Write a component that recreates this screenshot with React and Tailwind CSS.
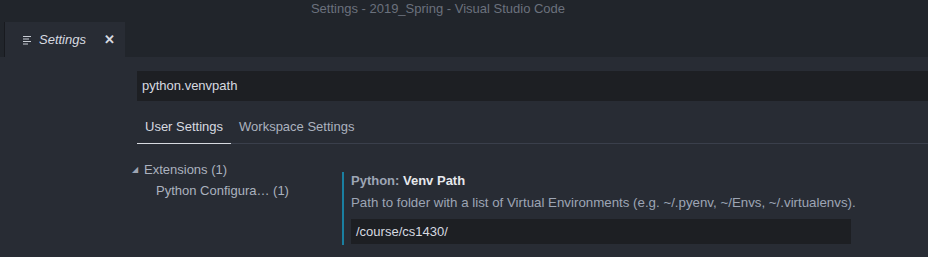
import React from 'react';

const font = { fontFamily: '"Liberation Sans", Arial, sans-serif' };

const App = () => {
  return (
    <div className="w-[928px] h-[257px] overflow-hidden bg-[#282c34] text-[13px] text-[#abb2bf]" style={font}>
      {/* title bar */}
      <div className="h-[22px] bg-[#21252b] flex items-center justify-center text-[13px] text-[#6b717d] pb-[5px] pr-[52px]">
        Settings - 2019_Spring - Visual Studio Code
      </div>

      {/* tab strip */}
      <div className="h-[35px] bg-[#21252b] flex pl-[4px]">
        <div className="w-[121px] h-full bg-[#282c34] border-l border-[#181a1f] flex items-center pl-[18px] pr-[10px]">
          <svg width="10" height="10" viewBox="0 0 10 10" className="mr-[6px]">
            <g fill="#c8ccd4">
              <rect x="0" y="1" width="8" height="1" />
              <rect x="0" y="3.5" width="6" height="1" />
              <rect x="0" y="6" width="8" height="1" />
              <rect x="0" y="8.5" width="5" height="1" />
            </g>
          </svg>
          <span className="italic text-[#d7dae0] text-[13px]">Settings</span>
          <span className="ml-auto text-[#d7dae0] text-[13px] font-bold leading-none pb-[1px]">✕</span>
        </div>
      </div>

      {/* body */}
      <div className="pl-[137px] pt-[14px]">
        <div className="h-[30px] bg-[#1d1f23] flex items-center pl-[5px] text-[13px] text-[#d7dae0]">
          python.venvpath
        </div>

        <div className="mt-[10px] flex border-b border-[#3a3f4b] h-[33px] items-stretch">
          <div className="relative px-[8px] flex items-center text-[#d7dae0]">
            User Settings
            <div className="absolute left-0 right-0 -bottom-[1px] h-[1.5px] bg-[#d7dae0]" />
          </div>
          <div className="px-[8px] flex items-center text-[#abb2bf]">Workspace Settings</div>
        </div>

        <div className="flex mt-[16px]">
          <div className="w-[210px] shrink-0 -ml-[5px]">
            <div className="flex items-center h-[20px]">
              <span className="text-[8px] text-[#9da5b4] mr-[6px] leading-none">◢</span>
              <span>Extensions (1)</span>
            </div>
            <div className="h-[22px] flex items-center pl-[24px]">Python Configura… (1)</div>
          </div>

          <div className="border-l-2 border-[#1a7fa0] pl-[7px] mt-[12px] pb-[1px]">
            <div className="font-bold text-[13px] -mt-[1px]">
              <span className="text-[#9da5b4]">Python: </span>
              <span className="text-[#e6e8ec]">Venv Path</span>
            </div>
            <div className="mt-[2px] text-[13.3px] text-[#9da5b4]">
              Path to folder with a list of Virtual Environments (e.g. ~/.pyenv, ~/Envs, ~/.virtualenvs).
            </div>
            <div className="mt-[7px] w-[500px] h-[25px] bg-[#1d1f23] flex items-center pl-[5px] text-[#d7dae0]">
              /course/cs1430/
            </div>
          </div>
        </div>
      </div>
    </div>
  );
};

export default App;
